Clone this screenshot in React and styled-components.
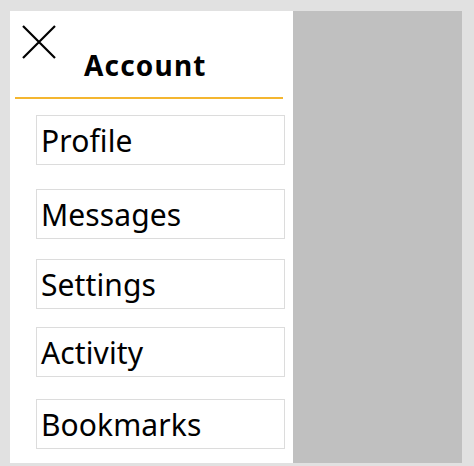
import React from "react";
import styled, { createGlobalStyle } from "styled-components";

const Global = createGlobalStyle`
  html, body { margin: 0; padding: 0; background: #e1e1e1; }
  body { font-family: "Noto Sans", "Open Sans", sans-serif; color: #000; }
  * { box-sizing: border-box; }
`;

const Frame = styled.div`
  height: 466px;
  padding: 11px 12px 3px 10px;
  display: flex;
`;

const Sidebar = styled.aside`
  width: 283px;
  background: #fff;
  display: flex;
  flex-direction: column;
`;

const Main = styled.main`
  flex: 1;
  background: #c0c0c0;
`;

const Header = styled.header`
  height: 86px;
  display: flex;
  align-items: flex-start;
  padding: 14px 0 0 12px;
`;

const CloseButton = styled.button`
  width: 34px;
  height: 34px;
  padding: 0;
  border: 0;
  background: transparent;
  cursor: pointer;
  display: flex;
`;

const Title = styled.h1`
  margin: 26px 0 0 28px;
  font-size: 28px;
  line-height: 28px;
  font-weight: 700;
  letter-spacing: 1.2px;
  color: #000;
`;

const Divider = styled.hr`
  margin: 0 10px 0 5px;
  border: 0;
  height: 2px;
  background: #f4b630;
`;

const List = styled.nav`
  display: flex;
  flex-direction: column;
  padding: 16px 8px 0 26px;
`;

const Item = styled.a`
  display: block;
  height: 50px;
  margin-top: ${(p) => p.$gap}px;
  padding: 10px 4px 0;
  border: 1px solid #dcdcdc;
  font-size: 30px;
  line-height: 30px;
  letter-spacing: 0.1px;
  color: #000;
  text-decoration: none;
`;

const items = [
  { label: "Profile", gap: 0 },
  { label: "Messages", gap: 24 },
  { label: "Settings", gap: 20 },
  { label: "Activity", gap: 18 },
  { label: "Bookmarks", gap: 22 },
];

export default function App() {
  return (
    <>
      <Global />
      <Frame>
        <Sidebar>
          <Header>
            <CloseButton aria-label="Close">
              <svg width="34" height="34" viewBox="0 0 34 34">
                <path d="M1 1 L33 33 M33 1 L1 33" stroke="#000" strokeWidth="2.2" fill="none" />
              </svg>
            </CloseButton>
            <Title>Account</Title>
          </Header>
          <Divider />
          <List>
            {items.map((it) => (
              <Item key={it.label} href="#" $gap={it.gap}>
                {it.label}
              </Item>
            ))}
          </List>
        </Sidebar>
        <Main />
      </Frame>
    </>
  );
}
